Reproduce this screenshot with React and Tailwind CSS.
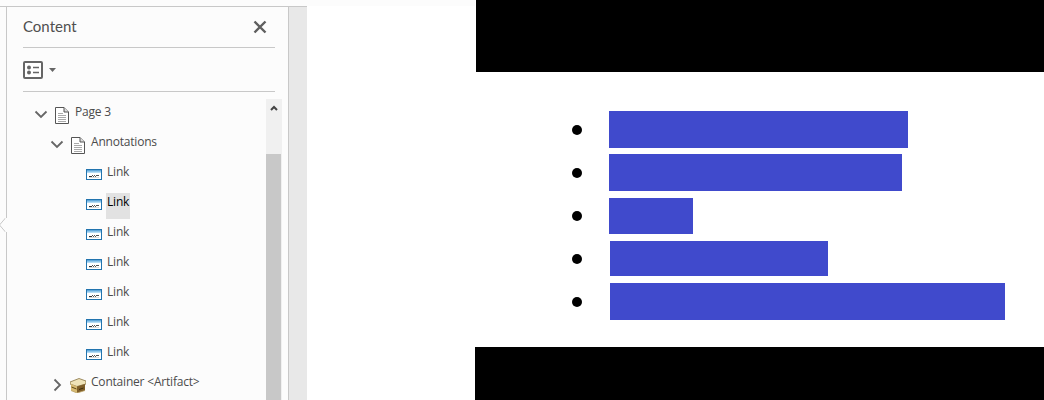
const FONT = "font-['Open_Sans',_'Noto_Sans',sans-serif]";

function Chevron({ open, className }) {
  return (
    <svg width="14" height="14" viewBox="0 0 14 14" className={className}>
      <path d={open ? "M1.5 4.5 L7 10 L12.5 4.5" : "M4.5 1.5 L10 7 L4.5 12.5"} fill="none" stroke="#666" strokeWidth="1.8" />
    </svg>
  );
}

function DocIcon() {
  return (
    <svg width="14" height="17" viewBox="0 0 14 17" className="shrink-0 mt-[10px]">
      <path d="M.5.5H9L13.5 5V16.5H.5Z" fill="#fff" stroke="#555" />
      <path d="M9 .5V5H13.5" fill="#ddd" stroke="#555" />
      <path d="M3 6.5H8M3 8.5H11M3 10.5H11M3 12.5H11M3 14.5H11" stroke="#aaa" />
    </svg>
  );
}

function LinkIcon() {
  return (
    <svg width="16" height="11" viewBox="0 0 16 11" className="shrink-0 mt-[12px]" shapeRendering="crispEdges">
      <rect x="0" y="0" width="16" height="11" fill="#2274ae" />
      <rect x="1" y="1" width="14" height="9" fill="#fff" />
      <rect x="1" y="1" width="14" height="1" fill="#5ea6da" />
      <rect x="1" y="2" width="14" height="1" fill="#8cc3e8" />
      <rect x="1" y="3" width="14" height="1" fill="#b5dcf4" />
      <rect x="3" y="7" width="3" height="1" fill="#333" />
      <rect x="6" y="6" width="1" height="1" fill="#555" />
      <rect x="7" y="7" width="1" height="1" fill="#555" />
      <rect x="8" y="6" width="1" height="1" fill="#555" />
      <rect x="9" y="7" width="1" height="1" fill="#555" />
      <rect x="10" y="6" width="3" height="1" fill="#555" />
      <rect x="3" y="8" width="10" height="1" fill="#ddd" />
    </svg>
  );
}

function BoxIcon() {
  return (
    <svg width="16" height="15" viewBox="0 0 16 15" className="shrink-0 mt-[11px]">
      <path d="M0 4L9 0.5L16 3V6L7 8.5L0 6Z" fill="#efe3b8" stroke="#77602c" strokeWidth=".7" />
      <path d="M1 6L7 8.5V15L1 12.5Z" fill="#d8bb72" />
      <path d="M7 8.5L15 6V12.5L7 15Z" fill="#7d5d28" />
      <path d="M1.5 9L6.5 11" stroke="#5f4718" strokeWidth="1" />
      <path d="M9 11.5L13.5 10" stroke="#3f2d0c" strokeWidth="1" />
      <path d="M1 12.5L7 15L15 12.5" fill="none" stroke="#b9a063" strokeWidth=".8" />
    </svg>
  );
}

function Label({ children, selected }) {
  return (
    <span
      className={`block h-[26px] mt-[6px] px-px text-[12px] leading-[18px] tracking-[-0.2px] whitespace-nowrap ${
        selected ? "bg-[#e2e2e2] text-black" : "text-[#4b4b4b]"
      }`}
    >
      {children}
    </span>
  );
}

function LinkRow({ selected }) {
  return (
    <div className="flex h-[30px] items-start pl-[63px] gap-[4px]">
      <LinkIcon />
      <Label selected={selected}>Link</Label>
    </div>
  );
}

const bars = [
  { ml: "ml-[27px]", w: "w-[299px]", h: "h-[37px]", mt: "mt-[39px]" },
  { ml: "ml-[27px]", w: "w-[293px]", h: "h-[37px]", mt: "mt-[6px]" },
  { ml: "ml-[27px]", w: "w-[84px]", h: "h-[36px]", mt: "mt-[7px]" },
  { ml: "ml-[28px]", w: "w-[218px]", h: "h-[35px]", mt: "mt-[7px]" },
  { ml: "ml-[28px]", w: "w-[395px]", h: "h-[37px]", mt: "mt-[7px]" },
];

export default function App() {
  return (
    <div className={`flex h-[400px] w-[1044px] overflow-hidden bg-white ${FONT}`}>
      <div className="flex w-[307px] shrink-0 flex-col bg-[#fcfcfc]">
        <div className="h-[6px] shrink-0" />
        <div className="flex flex-1 border-t border-[#c8c8c8]">
          <div className="relative ml-[6px] flex w-[283px] shrink-0 flex-col border-x border-[#c8c8c8]">
            <svg width="9" height="14" viewBox="0 0 9 14" className="absolute left-[-8px] top-[211px]">
              <path d="M6.5 0 L.5 7 L6.5 14" fill="#fcfcfc" stroke="#c8c8c8" />
              <rect x="6.5" y="0" width="2.5" height="14" fill="#fcfcfc" />
            </svg>
            <div className="mx-[16px] flex h-[41px] w-[252px] shrink-0 items-center justify-between border-b border-[#c8c8c8]">
              <span className="mb-px font-['Lato',sans-serif] text-[15px] text-[#4f4f4f]">Content</span>
              <svg width="14" height="14" viewBox="0 0 14 14" className="mr-[8px]">
                <path d="M1.5 1.5L12.5 12.5M12.5 1.5L1.5 12.5" stroke="#5f5f5f" strokeWidth="2.4" />
              </svg>
            </div>
            <div className="mx-[16px] flex h-[44px] w-[252px] shrink-0 items-center gap-[6px] border-b border-[#c8c8c8]">
              <svg width="20" height="18" viewBox="0 0 20 18">
                <rect x="1" y="1" width="18" height="16" rx="1" fill="#fff" stroke="#666" strokeWidth="2" />
                <circle cx="6" cy="6.5" r="2" fill="#666" />
                <circle cx="6" cy="11.5" r="2" fill="#666" />
                <path d="M10 6.5H16M10 11.5H16" stroke="#666" strokeWidth="1.6" />
              </svg>
              <svg width="7" height="4" viewBox="0 0 7 4">
                <path d="M0 0H7L3.5 4Z" fill="#666" />
              </svg>
            </div>
            <div className="flex min-h-0 flex-1">
              <div className="ml-[16px] w-[243px] shrink-0 pt-[5px]">
                <div className="flex h-[30px] items-start">
                  <Chevron open className="ml-[11px] mt-[10px] shrink-0" />
                  <span className="w-[7px] shrink-0" />
                  <DocIcon />
                  <span className="w-[5px] shrink-0" />
                  <Label>Page 3</Label>
                </div>
                <div className="flex h-[30px] items-start">
                  <Chevron open className="ml-[27px] mt-[10px] shrink-0" />
                  <span className="w-[7px] shrink-0" />
                  <DocIcon />
                  <span className="w-[5px] shrink-0" />
                  <Label>Annotations</Label>
                </div>
                <LinkRow />
                <LinkRow selected />
                <LinkRow />
                <LinkRow />
                <LinkRow />
                <LinkRow />
                <LinkRow />
                <div className="flex h-[30px] items-start">
                  <Chevron className="ml-[27px] mt-[11px] shrink-0" />
                  <span className="w-[6px] shrink-0" />
                  <BoxIcon />
                  <span className="w-[4px] shrink-0" />
                  <Label>{"Container <Artifact>"}</Label>
                </div>
              </div>
              <div className="mt-[7px] flex w-[16px] shrink-0 flex-col bg-[#f0f0f0]">
                <div className="flex h-[55px] shrink-0 justify-center pt-[6px]">
                  <svg width="8" height="6" viewBox="0 0 8 6">
                    <path d="M1 5L4 2L7 5" fill="none" stroke="#444" strokeWidth="2" />
                  </svg>
                </div>
                <div className="w-[15px] flex-1 bg-[#c8c8c8]" />
              </div>
            </div>
          </div>
          <div className="flex-1 bg-[#e8e8e8]" />
        </div>
      </div>
      <div className="flex h-full w-[168px] shrink-0 flex-col bg-white">
        <div className="h-[6px] bg-[#fcfcfc]" />
      </div>
      <div className="flex h-full w-[569px] shrink-0 flex-col">
        <div className="ml-px h-[72px] shrink-0 bg-black" />
        <div className="flex-1">
          {bars.map((b, i) => (
            <div key={i} className={`flex items-center ${b.mt}`}>
              <span className="ml-[97px] h-[10px] w-[10px] shrink-0 rounded-full bg-black" />
              <span className={`${b.ml} ${b.w} ${b.h} bg-[#404acc]`} />
            </div>
          ))}
        </div>
        <div className="h-[53px] shrink-0 bg-black" />
      </div>
    </div>
  );
}
